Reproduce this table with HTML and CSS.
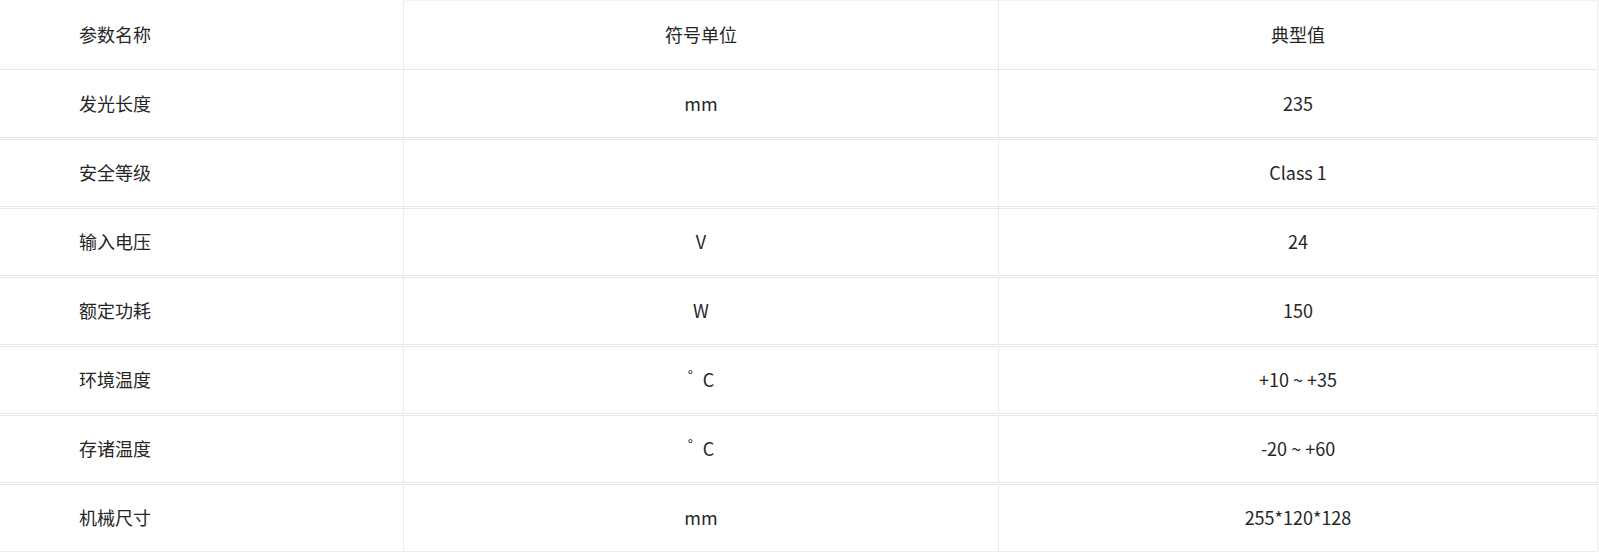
FILE: index.html
```html
<!DOCTYPE html>
<html lang="zh-CN">
<head>
<meta charset="utf-8">
<title>参数表</title>
<link rel="stylesheet" href="styles.css">
</head>
<body>
<div class="spec">
  <div class="row head">
    <div class="cell name">参数名称</div>
    <div class="cell unit">符号单位</div>
    <div class="cell val">典型值</div>
  </div>
  <div class="row first">
    <div class="cell name">发光长度</div>
    <div class="cell unit">mm</div>
    <div class="cell val">235</div>
  </div>
  <div class="row">
    <div class="cell name">安全等级</div>
    <div class="cell unit"></div>
    <div class="cell val">Class 1</div>
  </div>
  <div class="row">
    <div class="cell name">输入电压</div>
    <div class="cell unit">V</div>
    <div class="cell val">24</div>
  </div>
  <div class="row">
    <div class="cell name">额定功耗</div>
    <div class="cell unit">W</div>
    <div class="cell val">150</div>
  </div>
  <div class="row">
    <div class="cell name">环境温度</div>
    <div class="cell unit"><span class="deg">°</span>C</div>
    <div class="cell val">+10 ~ +35</div>
  </div>
  <div class="row">
    <div class="cell name">存诸温度</div>
    <div class="cell unit"><span class="deg">°</span>C</div>
    <div class="cell val">-20 ~ +60</div>
  </div>
  <div class="row last">
    <div class="cell name">机械尺寸</div>
    <div class="cell unit">mm</div>
    <div class="cell val">255*120*128</div>
  </div>
</div>
</body>
</html>
```
FILE: styles.css
```css
html, body {
  margin: 0;
  padding: 0;
  background: #ffffff;
}

body {
  font-family: "Noto Sans CJK SC", "Noto Sans", sans-serif;
  font-size: 18px;
  color: #262626;
}

.spec {
  width: 1598px;
}

.row {
  display: flex;
}

.cell {
  display: flex;
  align-items: center;
  height: 64px;
  padding-bottom: 2px;
  border-right: 1px solid #ececec;
  border-top: 3px double #e8e8e8;
  box-sizing: content-box;
}

.head .cell {
  height: 66px;
  border-top: 1px solid #f3f3f3;
  border-bottom: 1px solid #e8e8e8;
}

.head .cell.name {
  border-top-color: #ffffff;
}

.first .cell {
  height: 65px;
  border-top: none;
}

.last .cell {
  border-bottom: 1px solid #ececec;
}

.name {
  width: 324px;
  padding-left: 79px;
}

.unit {
  width: 594px;
  justify-content: center;
}

.val {
  width: 598px;
  justify-content: center;
}

.deg {
  font-size: 14px;
  margin-right: 10px;
  position: relative;
  top: -4px;
}
```
